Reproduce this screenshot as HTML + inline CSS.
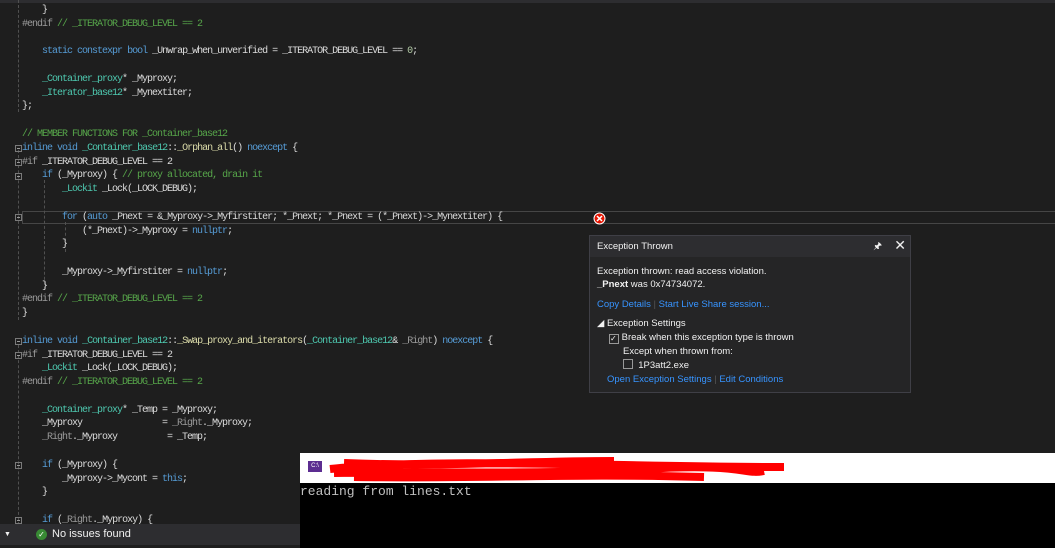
<!DOCTYPE html>
<html><head><meta charset="utf-8"><style>
body{margin:0;width:1055px;height:548px;background:#1e1e1e;overflow:hidden;position:relative;font-family:"Liberation Sans",sans-serif}
.code{position:absolute;left:22px;top:4px;font-family:"Liberation Mono",monospace;font-size:10px;letter-spacing:-1px;line-height:13.78px;color:#dcdcdc;white-space:pre}
.k{color:#569cd6}.t{color:#4ec9b0}.c{color:#57a64a}.p{color:#9b9b9b}.n{color:#b5cea8}.f{color:#dcdcaa}
.box{position:absolute;left:15px;width:7px;height:7px;border:1px solid #7a7a7a;box-sizing:border-box}
.box:after{content:"";position:absolute;left:1px;top:2px;width:3px;height:1px;background:#9a9a9a}
.vl{position:absolute;border-left:1px dashed #505050}
.pop{position:absolute;left:589px;top:235px;width:322px;height:158px;background:#252526;border:1px solid #3f3f46;box-sizing:border-box;font-size:9.5px;color:#f1f1f1}
.hd{height:21px;background:#2d2d30;padding-left:7px;line-height:21px}
.a{color:#3794ff}
</style></head><body>
<div style="position:absolute;left:0;top:0;width:1055px;height:3px;background:#2d2d30"></div>
<div style="position:absolute;left:22px;top:211px;width:1040px;height:13px;border:1px solid #464646;box-sizing:border-box"></div>
<div class="vl" style="left:18px;top:0;height:112px"></div>
<div class="vl" style="left:18px;top:150px;height:170px"></div>
<div class="vl" style="left:18px;top:345px;height:180px"></div>
<div class="vl" style="left:44px;top:180px;height:110px"></div>
<div class="vl" style="left:65px;top:222px;height:30px"></div>
<div class="box" style="top:145px"></div><div class="box" style="top:159px"></div><div class="box" style="top:173px"></div><div class="box" style="top:214px"></div>
<div class="box" style="top:338px"></div><div class="box" style="top:352px"></div><div class="box" style="top:462px"></div><div class="box" style="top:517px"></div>
<div class="code">    }
<span class="p">#endif</span> <span class="c">// _ITERATOR_DEBUG_LEVEL == 2</span>

    <span class="k">static</span> <span class="k">constexpr</span> <span class="k">bool</span> _Unwrap_when_unverified = _ITERATOR_DEBUG_LEVEL == <span class="n">0</span>;

    <span class="t">_Container_proxy</span>* _Myproxy;
    <span class="t">_Iterator_base12</span>* _Mynextiter;
};

<span class="c">// MEMBER FUNCTIONS FOR _Container_base12</span>
<span class="k">inline</span> <span class="k">void</span> <span class="t">_Container_base12</span>::<span class="f">_Orphan_all</span>() <span class="k">noexcept</span> {
<span class="p">#if</span> _ITERATOR_DEBUG_LEVEL == 2
    <span class="k">if</span> (_Myproxy) { <span class="c">// proxy allocated, drain it</span>
        <span class="t">_Lockit</span> _Lock(_LOCK_DEBUG);

        <span class="k">for</span> (<span class="k">auto</span> _Pnext = &amp;_Myproxy-&gt;_Myfirstiter; *_Pnext; *_Pnext = (*_Pnext)-&gt;_Mynextiter) {
            (*_Pnext)-&gt;_Myproxy = <span class="k">nullptr</span>;
        }

        _Myproxy-&gt;_Myfirstiter = <span class="k">nullptr</span>;
    }
<span class="p">#endif</span> <span class="c">// _ITERATOR_DEBUG_LEVEL == 2</span>
}

<span class="k">inline</span> <span class="k">void</span> <span class="t">_Container_base12</span>::<span class="f">_Swap_proxy_and_iterators</span>(<span class="t">_Container_base12</span>&amp; <span class="p">_Right</span>) <span class="k">noexcept</span> {
<span class="p">#if</span> _ITERATOR_DEBUG_LEVEL == 2
    <span class="t">_Lockit</span> _Lock(_LOCK_DEBUG);
<span class="p">#endif</span> <span class="c">// _ITERATOR_DEBUG_LEVEL == 2</span>

    <span class="t">_Container_proxy</span>* _Temp = _Myproxy;
    _Myproxy                = <span class="p">_Right</span>._Myproxy;
    <span class="p">_Right</span>._Myproxy          = _Temp;

    <span class="k">if</span> (_Myproxy) {
        _Myproxy-&gt;_Mycont = <span class="k">this</span>;
    }

    <span class="k">if</span> (<span class="p">_Right</span>._Myproxy) {</div>
<svg style="position:absolute;left:593px;top:212px" width="13" height="13"><circle cx="6.5" cy="6.5" r="5.5" fill="#e51400" stroke="#fff" stroke-width="1"/><path d="M4 4L9 9M9 4L4 9" stroke="#fff" stroke-width="1.5"/></svg>
<div class="pop"><div class="hd">Exception Thrown<span style="position:absolute;right:28px;top:0">&#x1F588;</span><span style="position:absolute;right:4px;top:-1px;font-size:14px">✕</span></div>
<div style="position:absolute;left:7px;top:29px;line-height:13px">Exception thrown: read access violation.<br><b>_Pnext</b> was 0x74734072.</div>
<div style="position:absolute;left:7px;top:63px"><span class="a">Copy Details</span> <span style="color:#555">|</span> <span class="a">Start Live Share session...</span></div>
<div style="position:absolute;left:7px;top:82px">◢ Exception Settings</div>
<div style="position:absolute;left:19px;top:96px"><span style="display:inline-block;width:8px;height:8px;border:1px solid #999;font-size:8px;line-height:8px;vertical-align:-1px">✓</span> Break when this exception type is thrown</div>
<div style="position:absolute;left:33px;top:110px">Except when thrown from:</div>
<div style="position:absolute;left:33px;top:123px"><span style="display:inline-block;width:8px;height:8px;border:1px solid #999;vertical-align:-1px"></span>&nbsp; 1P3att2.exe</div>
<div style="position:absolute;left:17px;top:138px"><span class="a">Open Exception Settings</span> <span style="color:#555">|</span> <span class="a">Edit Conditions</span></div>
</div>
<div style="position:absolute;left:300px;top:453px;width:755px;height:30px;background:#fff"></div>
<div style="position:absolute;left:308px;top:461px;width:14px;height:11px;background:#5c2d91;color:#fff;font-size:6px;line-height:11px;text-align:center">C:\</div>
<svg style="position:absolute;left:324px;top:455px" width="470" height="28"><path d="M6 14C80 6 200 8 300 10S440 12 460 12M10 18C100 16 220 20 320 14S420 20 440 16M20 8C120 12 200 6 290 6M30 22C150 24 250 18 380 22" stroke="#f00" stroke-width="8" fill="none"/></svg>
<div style="position:absolute;left:300px;top:483px;width:755px;height:65px;background:#000"></div>
<div style="position:absolute;left:300px;top:484px;font-family:'Liberation Mono',monospace;font-size:13px;color:#c0c0c0">reading from lines.txt</div>
<div style="position:absolute;left:0;top:524px;width:300px;height:21px;background:#2d2d30;color:#f1f1f1;font-size:11px;line-height:21px"><span style="position:absolute;left:4px;font-size:7px">▼</span><span style="position:absolute;left:36px;top:5px;width:11px;height:11px;border-radius:50%;background:#388a34;color:#fff;font-size:8px;line-height:11px;text-align:center">✓</span><span style="position:absolute;left:52px">No issues found</span></div>
<div style="position:absolute;left:0;top:545px;width:300px;height:3px;background:#1e1e1e"></div>
</body></html>
